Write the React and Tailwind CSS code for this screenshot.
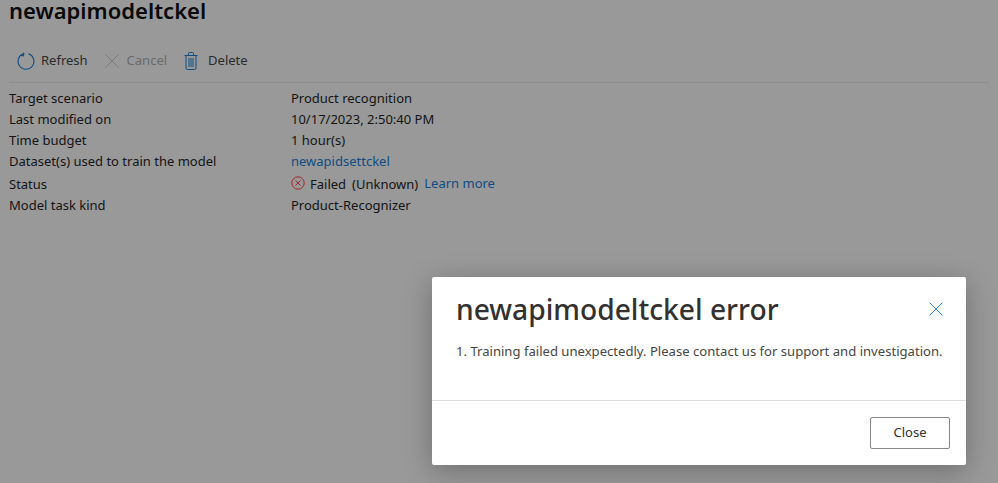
import React from "react";

const rows = [
  ["Target scenario", "Product recognition"],
  ["Last modified on", "10/17/2023, 2:50:40 PM"],
  ["Time budget", "1 hour(s)"],
  ["Dataset(s) used to train the model", <span className="text-[#0f4c81]">newapidsettckel</span>],
  ["Status", (
    <span className="flex items-center">
      <svg width="14" height="14" viewBox="0 0 14 14" fill="none" stroke="#a4262c" strokeWidth="1" className="mr-[5px] -mt-[3px]">
        <circle cx="7" cy="7" r="6.200" />
        <path d="M4.500 4.500l5 5M9.500 4.500l-5 5" />
      </svg>
      <span>Failed</span>
      <span className="ml-[6px]">(Unknown)</span>
      <span className="ml-[6px] -mt-[1px] text-[#0f4c81]">Learn more</span>
    </span>
  )],
  ["Model task kind", "Product-Recognizer"],
];

export default function App() {
  return (
    <div className="relative w-[998px] h-[483px] overflow-hidden bg-[#999999] text-[#141414] text-[13px] font-['Noto_Sans','Open_Sans',sans-serif]">
      <h1 className="pl-[9px] h-[26px] text-[22px] leading-[20px] font-semibold text-[#0a0a0a] whitespace-nowrap">newapimodeltckel</h1>
      <div className="mt-[17px] mx-[9px] h-[40px] flex items-center pb-[4px] border-b border-[#8d8d8d] text-[#2b2b2b]">
        <div className="flex items-center ml-[8px]">
          <svg width="18" height="18" viewBox="0 0 18 18" fill="none" stroke="#0f4c81" strokeWidth="1.100">
            <path d="M6.500 1.800A7.900 7.900 0 1 0 11.500 1.800" />
            <path d="M6.800 0.600L6.500 3.900L3.400 3.300" />
          </svg>
          <span className="ml-[6px]">Refresh</span>
        </div>
        <div className="flex items-center ml-[17px] text-[#6a6a6a]">
          <svg width="14" height="14" viewBox="0 0 14 14" fill="none" stroke="#7a7a7a" strokeWidth="1">
            <path d="M0.500 0.500l13 13M13.500 0.500l-13 13" />
          </svg>
          <span className="ml-[8px]">Cancel</span>
        </div>
        <div className="flex items-center ml-[17px]">
          <svg width="14" height="18" viewBox="0 0 14 18" fill="none" stroke="#0f4c81" strokeWidth="1">
            <path d="M0.500 3.500h13M4.500 3.500V1.500a1 1 0 0 1 1-1h3a1 1 0 0 1 1 1v2M2 3.500v12.500a1.500 1.500 0 0 0 1.500 1.500h7a1.500 1.500 0 0 0 1.500-1.500V3.500M5 6v9M7 6v9M9 6v9" />
          </svg>
          <span className="ml-[10px]">Delete</span>
        </div>
      </div>
      <div className="mt-[5px] pl-[9px]">
        {rows.map(([k, v], i) => (
          <div key={i} className={i === 4 ? "flex items-center h-[23px] pt-[2px] whitespace-nowrap" : "flex items-center h-[21px] whitespace-nowrap"}>
            <div className="w-[282px]">{k}</div>
            <div>{v}</div>
          </div>
        ))}
      </div>

      <div className="absolute left-[432px] top-[277px] w-[534px] h-[188px] bg-white rounded-[2px] shadow-[0_6px_28px_rgba(0,0,0,0.28)] flex flex-col">
        <div className="flex items-start justify-between pl-[24px] pr-[23px] pt-[14px] h-[64px]">
          <h2 className="text-[28.200px] leading-[36px] font-medium text-[#323130] whitespace-nowrap">newapimodeltckel error</h2>
          <svg width="14" height="14" viewBox="0 0 14 14" fill="none" stroke="#2b8ae0" strokeWidth="1" className="mt-[11px]">
            <path d="M0.500 0.500l13 13M13.500 0.500l-13 13" />
          </svg>
        </div>
        <p className="pl-[24px] text-[13.100px] leading-[20px] text-[#484644] whitespace-nowrap">1. Training failed unexpectedly. Please contact us for support and investigation.</p>
        <div className="mt-[39px] border-t border-[#e1dfdd] flex-1 flex items-center justify-end pr-[16px] pb-[1px]">
          <button className="w-[80px] h-[32px] border border-[#8a8886] rounded-[2px] text-[13px] text-[#323130] bg-white">Close</button>
        </div>
      </div>
    </div>
  );
}
